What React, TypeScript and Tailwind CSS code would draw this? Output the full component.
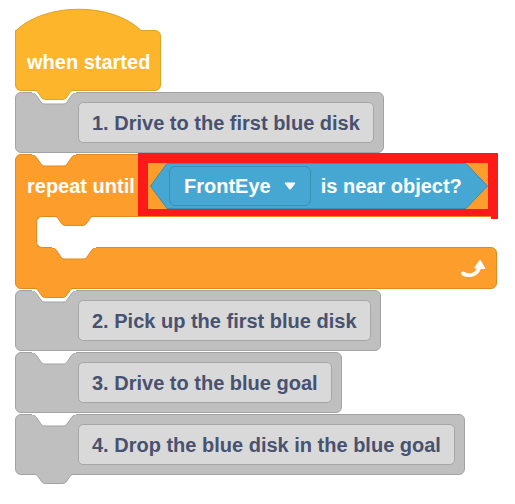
const FONT = "font-['Liberation_Sans',Arial,sans-serif]";

function Tab({ fill, stroke, className = "" }: { fill: string; stroke: string; className?: string }) {
  return (
    <svg
      width="42"
      height="12"
      viewBox="0 0 42 12"
      className={"absolute top-full z-10 -mt-px " + className}
    >
      <path
        d="M0,0.5 C2.5,0.5 3.5,1.5 5,3.5 L9,9 C10,10.2 11,10.5 13,10.5 L29,10.5 C31,10.5 32,10.2 33,9 L37,3.5 C38.5,1.5 39.5,0.5 42,0.5"
        fill={fill}
        stroke={stroke}
      />
      <rect x="0.5" y="0" width="41" height="1" fill={fill} />
    </svg>
  );
}

function Notch({ stroke, className = "left-[15px]" }: { stroke: string; className?: string }) {
  return (
    <svg width="46" height="13" viewBox="0 0 46 13" className={"absolute -top-px z-[5] " + className}>
      <path
        d="M0,0.5 C3,0.5 4,1.5 5.5,3.5 L10,10 C11,11.3 12,12 14,12 L32,12 C34,12 35,11.3 36,10 L40.5,3.5 C42,1.5 43,0.5 46,0.5"
        fill="#ffffff"
        stroke={stroke}
      />
      <rect x="1" y="0" width="44" height="1" fill="#ffffff" />
    </svg>
  );
}

function Step({ text, last = false }: { text: string; last?: boolean }) {
  return (
    <div className="relative flex h-[61px] items-center rounded-[6px] border border-[#a3a3a3] bg-[#bfbfbf] pl-[62px] pr-[9px]">
      <Notch stroke="#a3a3a3" />
      <div className="flex h-[41px] items-center rounded-[5px] border border-[#a6a6a6] bg-[#d9d9d9] px-[13px] text-[#485270]">
        {text}
      </div>
      {last && <Tab fill="#bfbfbf" stroke="#a3a3a3" className="left-[17px]" />}
    </div>
  );
}

function Condition() {
  return (
    <div className="relative flex h-[46px] w-[338px] shrink-0 items-center text-white">
      <svg width="338" height="46" viewBox="0 0 338 46" className="absolute inset-0">
        <polygon
          points="0.5,23 17,0.5 316,0.5 337.5,23 316,45.5 17,45.5"
          fill="#46a8d2"
          stroke="#3a8db3"
        />
      </svg>
      <div className="relative ml-[19px] flex h-[40px] items-center rounded-[6px] border border-[#3a8db3] bg-[#46a8d2] pl-[14px] pr-[14px]">
        <span>FrontEye</span>
        <svg width="12" height="8" viewBox="0 0 12 8" className="ml-[13px]">
          <path d="M1,1 L11,1 L6.5,7 Q6,7.6 5.5,7 Z" fill="#ffffff" stroke="#ffffff" strokeLinejoin="round" />
        </svg>
      </div>
      <span className="relative ml-[10px]">is near object?</span>
    </div>
  );
}

function LoopArrow() {
  return (
    <svg width="25" height="20" viewBox="0 0 25 20">
      <path d="M2,15.5 C7,18.5 16,18 18.5,9" fill="none" stroke="#ffffff" strokeWidth="3.8" strokeLinecap="round" />
      <path d="M13.5,10 L19,2 L24,10.5 Z" fill="#ffffff" stroke="#ffffff" strokeLinejoin="round" />
    </svg>
  );
}

function RepeatUntil() {
  const border = "#df891f";
  return (
    <div className="flex w-[482px] flex-col">
      <div className="relative flex h-[63px] items-center rounded-[6px] rounded-bl-none border border-[#df891f] bg-[#fd9e2c] pl-[11px]">
        <Notch stroke={border} />
        <span className="w-[111px] shrink-0 text-white">repeat until</span>
        <div className="flex h-[66px] w-[360px] shrink-0 items-center border-[10px] border-[#ff1a1a] pl-[2px]">
          <Condition />
        </div>
        <Tab fill="#fd9e2c" stroke={border} className="left-[37px]" />
      </div>
      <div className="relative z-[1] -my-px flex h-[32px] bg-[linear-gradient(to_right,#fd9e2c_30px,transparent_30px)]">
        <div className="w-[21px] border-l border-[#df891f]" />
        <div className="mr-[6px] flex-1 rounded-l-[6px] border-y border-l border-[#df891f] bg-white" />
      </div>
      <div className="relative flex h-[42px] items-center justify-end rounded-[6px] rounded-tl-none border border-[#df891f] bg-[#fd9e2c] pr-[10px]">
        <Notch stroke={border} className="left-[35px]" />
        <LoopArrow />
        <Tab fill="#fd9e2c" stroke={border} className="left-[17px]" />
      </div>
    </div>
  );
}

export default function App() {
  return (
    <div className={"min-h-[504px] bg-white pl-[15px] pt-[30px] text-[20px] font-bold leading-none " + FONT}>
      <div className="flex flex-col items-start gap-px">
        <div className="relative flex h-[61px] w-[146px] items-center rounded-[6px] rounded-tl-none border border-[#e0a225] bg-[#fdb52b] pl-[11px] pt-[2px] text-white">
          <svg width="128" height="24" viewBox="0 0 128 24" className="absolute bottom-full -left-px translate-y-px">
            <path d="M0.5,24 L0.5,23 C30,-6 98,-6 126.5,23 L126.5,24 Z" fill="#fdb52b" />
            <path d="M0.5,24 L0.5,23 C30,-6 98,-6 126.5,23" fill="none" stroke="#e0a225" />
          </svg>
          when started
          <Tab fill="#fdb52b" stroke="#e0a225" className="left-[17px]" />
        </div>
        <Step text="1. Drive to the first blue disk" />
        <RepeatUntil />
        <Step text="2. Pick up the first blue disk" />
        <Step text="3. Drive to the blue goal" />
        <Step text="4. Drop the blue disk in the blue goal" last />
      </div>
    </div>
  );
}
